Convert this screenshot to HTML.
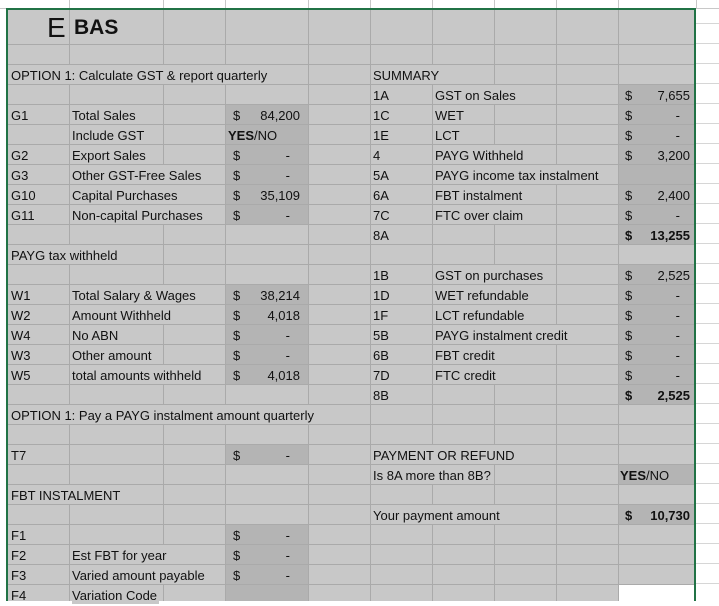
<!DOCTYPE html>
<html><head><meta charset="utf-8"><style>
*{margin:0;padding:0;box-sizing:border-box}
body{width:719px;height:601px;overflow:hidden;background:#fff;position:relative;font-family:"Liberation Sans",sans-serif;font-size:13px;color:#111}
.hdr{position:absolute;left:0;top:0;width:719px;height:9px;background:#fff;border-bottom:1px solid #c8c8c8}
.wgrid{position:absolute;left:696px;top:9px;width:23px;height:592px;background:repeating-linear-gradient(to bottom,transparent 0,transparent 14px,#d6d6d6 14px,#d6d6d6 15px,transparent 15px,transparent 20px)}
.sheet{position:absolute;left:8px;top:10px;width:686px;height:591px;background-color:#c8c8c8}
.d{position:absolute;background:#b4b4b4}
.vl{position:absolute;top:0;width:1px;height:9px;background:#c8c8c8}
.gv{position:absolute;top:10px;width:1px;height:591px;background:#aaa}
.gh{position:absolute;left:8px;width:686px;height:1px;background:#aaa}
.t{position:absolute;white-space:nowrap;line-height:20px;height:19px;padding-top:1px}
.l{background:#c8c8c8;padding-right:2px}
.r{text-align:right}
.b{font-weight:bold}
.g{position:absolute;background:#217346}
</style></head><body>
<div class="hdr"></div>
<div class="vl" style="left:69px"></div><div class="vl" style="left:163px"></div><div class="vl" style="left:225px"></div><div class="vl" style="left:308px"></div><div class="vl" style="left:370px"></div><div class="vl" style="left:432px"></div><div class="vl" style="left:494px"></div><div class="vl" style="left:556px"></div><div class="vl" style="left:618px"></div><div class="vl" style="left:696px"></div>
<div class="wgrid"></div>
<div class="sheet"></div>
<div class="d" style="left:225px;top:104px;width:83px;height:120px"></div>
<div class="d" style="left:225px;top:284px;width:83px;height:100px"></div>
<div class="d" style="left:225px;top:444px;width:83px;height:20px"></div>
<div class="d" style="left:225px;top:524px;width:83px;height:77px"></div>
<div class="d" style="left:618px;top:84px;width:76px;height:160px"></div>
<div class="d" style="left:618px;top:264px;width:76px;height:140px"></div>
<div class="d" style="left:618px;top:464px;width:76px;height:20px"></div>
<div class="d" style="left:618px;top:504px;width:76px;height:20px"></div>
<div style="position:absolute;left:618px;top:584px;width:76px;height:17px;background:#fff"></div>
<div class="gv" style="left:69px"></div><div class="gv" style="left:163px"></div><div class="gv" style="left:225px"></div><div class="gv" style="left:308px"></div><div class="gv" style="left:370px"></div><div class="gv" style="left:432px"></div><div class="gv" style="left:494px"></div><div class="gv" style="left:556px"></div><div class="gv" style="left:618px"></div>
<div class="gh" style="top:44px"></div><div class="gh" style="top:64px"></div><div class="gh" style="top:84px"></div><div class="gh" style="top:104px"></div><div class="gh" style="top:124px"></div><div class="gh" style="top:144px"></div><div class="gh" style="top:164px"></div><div class="gh" style="top:184px"></div><div class="gh" style="top:204px"></div><div class="gh" style="top:224px"></div><div class="gh" style="top:244px"></div><div class="gh" style="top:264px"></div><div class="gh" style="top:284px"></div><div class="gh" style="top:304px"></div><div class="gh" style="top:324px"></div><div class="gh" style="top:344px"></div><div class="gh" style="top:364px"></div><div class="gh" style="top:384px"></div><div class="gh" style="top:404px"></div><div class="gh" style="top:424px"></div><div class="gh" style="top:444px"></div><div class="gh" style="top:464px"></div><div class="gh" style="top:484px"></div><div class="gh" style="top:504px"></div><div class="gh" style="top:524px"></div><div class="gh" style="top:544px"></div><div class="gh" style="top:564px"></div><div class="gh" style="top:584px"></div>
<div class="g" style="left:6px;top:8px;width:2px;height:593px"></div>
<div class="g" style="left:694px;top:8px;width:2px;height:593px"></div>
<div class="g" style="left:6px;top:8px;width:690px;height:2px"></div>
<div class="t" style="left:47px;top:10px;height:34px;line-height:34px;font-size:28px">E</div>
<div class="t b" style="left:74px;top:10px;height:34px;line-height:34px;font-size:21px">BAS</div>
<div class="t l" style="left:11px;top:65px">OPTION 1: Calculate GST &amp; report quarterly</div>
<div class="t" style="left:11px;top:105px">G1</div><div class="t l" style="left:72px;top:105px">Total Sales</div><div class="t" style="left:233px;top:105px">$</div><div class="t r" style="left:240px;width:60px;top:105px">84,200</div>
<div class="t l" style="left:72px;top:125px">Include GST</div><div class="t" style="left:228px;top:125px"><b>YES</b>/NO</div>
<div class="t" style="left:11px;top:145px">G2</div><div class="t l" style="left:72px;top:145px">Export Sales</div><div class="t" style="left:233px;top:145px">$</div><div class="t r" style="left:240px;width:50px;top:145px">-</div>
<div class="t" style="left:11px;top:165px">G3</div><div class="t l" style="left:72px;top:165px">Other GST-Free Sales</div><div class="t" style="left:233px;top:165px">$</div><div class="t r" style="left:240px;width:50px;top:165px">-</div>
<div class="t" style="left:11px;top:185px">G10</div><div class="t l" style="left:72px;top:185px">Capital Purchases</div><div class="t" style="left:233px;top:185px">$</div><div class="t r" style="left:240px;width:60px;top:185px">35,109</div>
<div class="t" style="left:11px;top:205px">G11</div><div class="t l" style="left:72px;top:205px">Non-capital Purchases</div><div class="t" style="left:233px;top:205px">$</div><div class="t r" style="left:240px;width:50px;top:205px">-</div>
<div class="t l" style="left:11px;top:245px">PAYG tax withheld</div>
<div class="t" style="left:11px;top:285px">W1</div><div class="t l" style="left:72px;top:285px">Total Salary &amp; Wages</div><div class="t" style="left:233px;top:285px">$</div><div class="t r" style="left:240px;width:60px;top:285px">38,214</div>
<div class="t" style="left:11px;top:305px">W2</div><div class="t l" style="left:72px;top:305px">Amount Withheld</div><div class="t" style="left:233px;top:305px">$</div><div class="t r" style="left:240px;width:60px;top:305px">4,018</div>
<div class="t" style="left:11px;top:325px">W4</div><div class="t l" style="left:72px;top:325px">No ABN</div><div class="t" style="left:233px;top:325px">$</div><div class="t r" style="left:240px;width:50px;top:325px">-</div>
<div class="t" style="left:11px;top:345px">W3</div><div class="t l" style="left:72px;top:345px">Other amount</div><div class="t" style="left:233px;top:345px">$</div><div class="t r" style="left:240px;width:50px;top:345px">-</div>
<div class="t" style="left:11px;top:365px">W5</div><div class="t l" style="left:72px;top:365px">total amounts withheld</div><div class="t" style="left:233px;top:365px">$</div><div class="t r" style="left:240px;width:60px;top:365px">4,018</div>
<div class="t l" style="left:11px;top:405px">OPTION 1: Pay a PAYG instalment amount quarterly</div>
<div class="t" style="left:11px;top:445px">T7</div><div class="t" style="left:233px;top:445px">$</div><div class="t r" style="left:240px;width:50px;top:445px">-</div>
<div class="t l" style="left:11px;top:485px">FBT INSTALMENT</div>
<div class="t" style="left:11px;top:525px">F1</div><div class="t" style="left:233px;top:525px">$</div><div class="t r" style="left:240px;width:50px;top:525px">-</div>
<div class="t" style="left:11px;top:545px">F2</div><div class="t l" style="left:72px;top:545px">Est FBT for year</div><div class="t" style="left:233px;top:545px">$</div><div class="t r" style="left:240px;width:50px;top:545px">-</div>
<div class="t" style="left:11px;top:565px">F3</div><div class="t l" style="left:72px;top:565px">Varied amount payable</div><div class="t" style="left:233px;top:565px">$</div><div class="t r" style="left:240px;width:50px;top:565px">-</div>
<div class="t" style="left:11px;top:585px">F4</div><div class="t l" style="left:72px;top:585px">Variation Code</div>
<div class="t l" style="left:373px;top:65px">SUMMARY</div>
<div class="t" style="left:373px;top:85px">1A</div><div class="t l" style="left:435px;top:85px">GST on Sales</div><div class="t" style="left:625px;top:85px">$</div><div class="t r" style="left:630px;width:60px;top:85px">7,655</div>
<div class="t" style="left:373px;top:105px">1C</div><div class="t l" style="left:435px;top:105px">WET</div><div class="t" style="left:625px;top:105px">$</div><div class="t r" style="left:630px;width:50px;top:105px">-</div>
<div class="t" style="left:373px;top:125px">1E</div><div class="t l" style="left:435px;top:125px">LCT</div><div class="t" style="left:625px;top:125px">$</div><div class="t r" style="left:630px;width:50px;top:125px">-</div>
<div class="t" style="left:373px;top:145px">4</div><div class="t l" style="left:435px;top:145px">PAYG Withheld</div><div class="t" style="left:625px;top:145px">$</div><div class="t r" style="left:630px;width:60px;top:145px">3,200</div>
<div class="t" style="left:373px;top:165px">5A</div><div class="t l" style="left:435px;top:165px">PAYG income tax instalment</div>
<div class="t" style="left:373px;top:185px">6A</div><div class="t l" style="left:435px;top:185px">FBT instalment</div><div class="t" style="left:625px;top:185px">$</div><div class="t r" style="left:630px;width:60px;top:185px">2,400</div>
<div class="t" style="left:373px;top:205px">7C</div><div class="t l" style="left:435px;top:205px">FTC over claim</div><div class="t" style="left:625px;top:205px">$</div><div class="t r" style="left:630px;width:50px;top:205px">-</div>
<div class="t" style="left:373px;top:225px">8A</div><div class="t b" style="left:625px;top:225px">$</div><div class="t r b" style="left:630px;width:60px;top:225px">13,255</div>
<div class="t" style="left:373px;top:265px">1B</div><div class="t l" style="left:435px;top:265px">GST on purchases</div><div class="t" style="left:625px;top:265px">$</div><div class="t r" style="left:630px;width:60px;top:265px">2,525</div>
<div class="t" style="left:373px;top:285px">1D</div><div class="t l" style="left:435px;top:285px">WET refundable</div><div class="t" style="left:625px;top:285px">$</div><div class="t r" style="left:630px;width:50px;top:285px">-</div>
<div class="t" style="left:373px;top:305px">1F</div><div class="t l" style="left:435px;top:305px">LCT refundable</div><div class="t" style="left:625px;top:305px">$</div><div class="t r" style="left:630px;width:50px;top:305px">-</div>
<div class="t" style="left:373px;top:325px">5B</div><div class="t l" style="left:435px;top:325px">PAYG instalment credit</div><div class="t" style="left:625px;top:325px">$</div><div class="t r" style="left:630px;width:50px;top:325px">-</div>
<div class="t" style="left:373px;top:345px">6B</div><div class="t l" style="left:435px;top:345px">FBT credit</div><div class="t" style="left:625px;top:345px">$</div><div class="t r" style="left:630px;width:50px;top:345px">-</div>
<div class="t" style="left:373px;top:365px">7D</div><div class="t l" style="left:435px;top:365px">FTC credit</div><div class="t" style="left:625px;top:365px">$</div><div class="t r" style="left:630px;width:50px;top:365px">-</div>
<div class="t" style="left:373px;top:385px">8B</div><div class="t b" style="left:625px;top:385px">$</div><div class="t r b" style="left:630px;width:60px;top:385px">2,525</div>
<div class="t l" style="left:373px;top:445px">PAYMENT OR REFUND</div>
<div class="t l" style="left:373px;top:465px">Is 8A more than 8B?</div><div class="t" style="left:620px;top:465px"><b>YES</b>/NO</div>
<div class="t l" style="left:373px;top:505px">Your payment amount</div><div class="t b" style="left:625px;top:505px">$</div><div class="t r b" style="left:630px;width:60px;top:505px">10,730</div>
</body></html>
